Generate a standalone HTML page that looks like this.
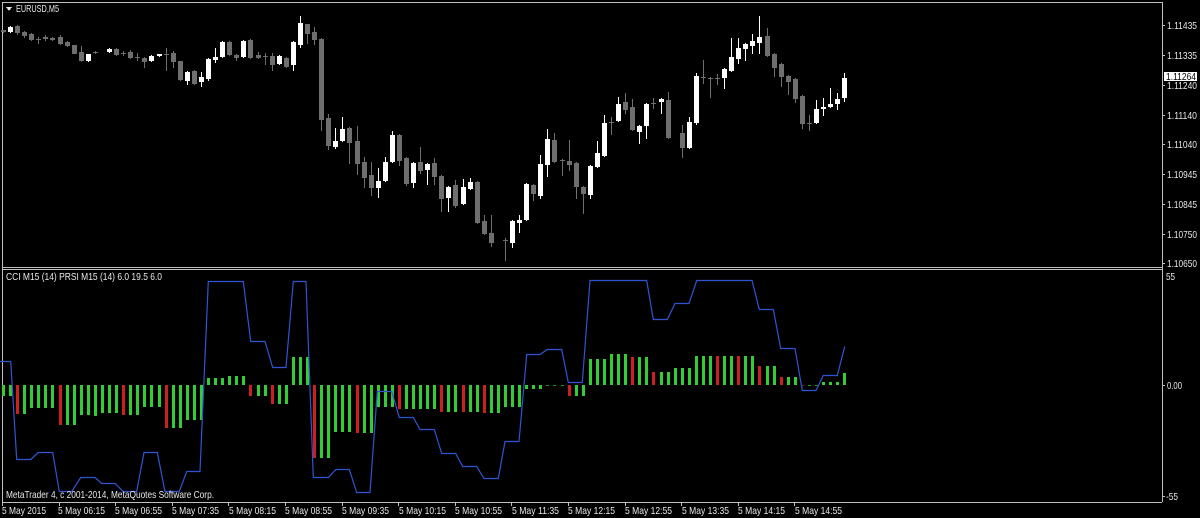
<!DOCTYPE html>
<html><head><meta charset="utf-8"><style>
html,body{margin:0;padding:0;background:#000;}
svg{display:block;}
text{font-family:"Liberation Sans",sans-serif;font-size:10.5px;fill:#e8e8e8;}
</style></head><body>
<svg id="s" width="1200" height="518" viewBox="0 0 1200 518" xmlns="http://www.w3.org/2000/svg" shape-rendering="crispEdges">
<rect width="1200" height="518" fill="#000"/>
<!-- frames -->
<line x1="2" y1="2.5" x2="1162" y2="2.5" stroke="#c0c0c0"/>
<line x1="2.5" y1="2" x2="2.5" y2="502" stroke="#c0c0c0"/>
<line x1="1162.5" y1="2" x2="1162.5" y2="502" stroke="#c0c0c0"/>
<line x1="2" y1="267.5" x2="1162" y2="267.5" stroke="#c0c0c0"/>
<line x1="2" y1="269.5" x2="1162" y2="269.5" stroke="#c0c0c0"/>
<line x1="2" y1="502.5" x2="1162" y2="502.5" stroke="#c0c0c0"/>
<g id="cand"></g>
<g id="hist"></g>
<polyline id="blue" fill="none" stroke="#2f55d4" stroke-width="1.2" shape-rendering="auto" points=""/>
<!-- titles -->
<path d="M6 7 L12 7 L9 11 Z" fill="#e8e8e8"/>
<text x="16" y="12" textLength="43" lengthAdjust="spacingAndGlyphs">EURUSD,M5</text>
<text x="6" y="280" textLength="156" lengthAdjust="spacingAndGlyphs">CCI M15 (14) PRSI M15 (14) 6.0 19.5 6.0</text>
<text x="6" y="498" textLength="208" lengthAdjust="spacingAndGlyphs">MetaTrader 4, c 2001-2014, MetaQuotes Software Corp.</text>
<!-- price axis -->
<g id="pax" stroke="#c0c0c0"></g>
<text x="1167" y="29" textLength="30" lengthAdjust="spacingAndGlyphs">1.11435</text>
<text x="1167" y="59" textLength="30" lengthAdjust="spacingAndGlyphs">1.11335</text>
<text x="1167" y="89" textLength="30" lengthAdjust="spacingAndGlyphs">1.11240</text>
<rect x="1164" y="72" width="33" height="9" fill="#fff"/>
<text x="1166" y="80" textLength="30" lengthAdjust="spacingAndGlyphs" style="fill:#000">1.11264</text>
<text x="1167" y="119" textLength="30" lengthAdjust="spacingAndGlyphs">1.11140</text>
<text x="1167" y="148" textLength="30" lengthAdjust="spacingAndGlyphs">1.11040</text>
<text x="1167" y="178" textLength="30" lengthAdjust="spacingAndGlyphs">1.10945</text>
<text x="1167" y="208" textLength="30" lengthAdjust="spacingAndGlyphs">1.10845</text>
<text x="1167" y="238" textLength="30" lengthAdjust="spacingAndGlyphs">1.10750</text>
<text x="1167" y="267" textLength="30" lengthAdjust="spacingAndGlyphs">1.10650</text>
<text x="1166" y="280" textLength="9" lengthAdjust="spacingAndGlyphs">55</text>
<text x="1167" y="389" textLength="15" lengthAdjust="spacingAndGlyphs">0.00</text>
<text x="1166" y="500" textLength="12" lengthAdjust="spacingAndGlyphs">-55</text>
<!-- time axis -->
<g id="tax" stroke="#c0c0c0"></g>
<text x="2" y="514" textLength="44" lengthAdjust="spacingAndGlyphs">5 May 2015</text>
<text x="58" y="514" textLength="47" lengthAdjust="spacingAndGlyphs">5 May 06:15</text>
<text x="115" y="514" textLength="47" lengthAdjust="spacingAndGlyphs">5 May 06:55</text>
<text x="172" y="514" textLength="47" lengthAdjust="spacingAndGlyphs">5 May 07:35</text>
<text x="229" y="514" textLength="47" lengthAdjust="spacingAndGlyphs">5 May 08:15</text>
<text x="285" y="514" textLength="47" lengthAdjust="spacingAndGlyphs">5 May 08:55</text>
<text x="342" y="514" textLength="47" lengthAdjust="spacingAndGlyphs">5 May 09:35</text>
<text x="399" y="514" textLength="47" lengthAdjust="spacingAndGlyphs">5 May 10:15</text>
<text x="455" y="514" textLength="47" lengthAdjust="spacingAndGlyphs">5 May 10:55</text>
<text x="512" y="514" textLength="47" lengthAdjust="spacingAndGlyphs">5 May 11:35</text>
<text x="568" y="514" textLength="47" lengthAdjust="spacingAndGlyphs">5 May 12:15</text>
<text x="625" y="514" textLength="47" lengthAdjust="spacingAndGlyphs">5 May 12:55</text>
<text x="682" y="514" textLength="47" lengthAdjust="spacingAndGlyphs">5 May 13:35</text>
<text x="738" y="514" textLength="47" lengthAdjust="spacingAndGlyphs">5 May 14:15</text>
<text x="795" y="514" textLength="47" lengthAdjust="spacingAndGlyphs">5 May 14:55</text>
</svg>
<script>
var NS="http://www.w3.org/2000/svg";
function el(p,t,a){var e=document.createElementNS(NS,t);for(var k in a)e.setAttribute(k,a[k]);p.appendChild(e);return e;}
function X(i){return 3+7.07*i;}
// candles: i, bodyTop, bodyBot, wickTop, wickBot, white(1)/gray(0)
var C=[[0,30,31,30,32,0],[1,27,31,26,32,1],[2,26,32,25,34,0],[3,32,35,31,37,0],[4,34,39,33,40,0],[5,39,39,37,43,0],[6,37,38,35,40,0],[7,38,39,37,40,0],[8,37,43,35,44,0],[9,42,45,41,46,0],[10,45,53,45,53,0],[11,52,60,46,61,0],[12,54,60,54,61,1],[13,52,52,51,53,0],[15,49,51,48,52,1],[16,49,54,48,55,0],[17,53,53,51,55,0],[18,52,57,50,58,0],[19,57,57,53,60,0],[20,58,61,57,67,0],[21,56,60,55,61,1],[22,54,55,54,56,1],[23,54,54,48,70,0],[24,53,61,51,67,0],[25,61,79,61,80,0],[26,72,80,71,84,1],[27,71,83,70,84,0],[28,77,81,72,86,1],[29,59,78,58,80,1],[30,57,59,48,62,1],[31,42,56,41,57,1],[32,42,54,41,55,0],[33,55,57,54,60,0],[34,41,56,40,57,1],[35,40,57,39,58,0],[36,55,57,52,58,0],[37,56,56,53,64,0],[38,56,64,53,70,0],[39,56,63,55,64,1],[40,58,66,57,67,0],[41,42,64,41,70,1],[42,23,44,16,47,1],[43,24,33,24,43,0],[44,32,39,27,44,0],[45,39,119,38,130,0],[46,118,145,114,149,0],[47,141,146,128,148,1],[48,129,140,117,141,1],[49,128,142,127,163,0],[50,141,163,126,174,0],[51,162,177,157,187,0],[52,175,187,162,195,0],[53,181,187,168,197,1],[54,162,180,157,181,1],[55,135,161,131,162,1],[56,135,160,134,165,0],[57,158,183,157,185,0],[58,163,182,162,187,1],[59,162,170,147,173,0],[60,164,169,163,184,1],[61,163,176,158,184,0],[62,176,198,175,211,0],[63,187,197,186,211,1],[64,185,205,180,207,0],[65,187,203,179,204,1],[66,182,188,178,189,1],[67,182,222,181,223,0],[68,221,233,215,234,0],[69,233,242,215,246,0],[71,240,240,238,260,0],[72,221,242,220,247,1],[73,220,222,215,232,1],[74,184,219,183,220,1],[75,185,193,184,200,0],[76,164,195,155,198,1],[77,139,164,129,176,1],[78,140,161,133,162,0],[79,160,160,159,175,0],[80,161,164,140,170,0],[81,163,186,162,198,0],[82,187,193,186,213,0],[83,166,194,165,198,1],[84,153,166,141,167,1],[85,123,155,115,156,1],[86,122,122,117,134,0],[87,104,120,97,121,1],[88,102,109,93,113,0],[89,107,129,99,130,0],[90,126,131,125,143,1],[91,104,125,103,138,1],[92,103,103,98,108,0],[93,99,101,98,113,1],[94,100,137,92,138,0],[96,133,147,125,157,0],[97,122,147,117,148,1],[98,76,122,73,124,1],[99,77,77,60,83,0],[100,78,78,77,97,0],[101,78,78,74,84,0],[102,69,77,68,88,1],[103,57,70,38,71,1],[104,48,58,38,63,1],[105,44,48,43,60,1],[106,41,45,34,53,1],[107,37,42,16,53,1],[108,36,55,28,56,0],[109,54,67,53,76,0],[110,64,76,63,86,0],[111,76,81,75,94,0],[112,79,98,78,102,0],[113,96,123,95,128,0],[114,123,123,115,130,0],[115,109,122,100,123,1],[116,107,108,98,115,1],[117,104,106,88,107,1],[118,99,103,93,109,1],[119,78,97,73,101,1]];
var g=document.getElementById("cand");
C.forEach(function(c){var x=Math.round(X(c[0]));var col=c[5]?"#ffffff":"#6e6e6e";
el(g,"rect",{x:x,y:c[3],width:1,height:Math.max(1,c[4]-c[3]+1),fill:col});
var h=c[2]-c[1];
if(h<1){el(g,"rect",{x:x-2,y:c[1],width:5,height:1,fill:col});}
else if(c[5]){el(g,"rect",{x:x-2,y:c[1],width:5,height:h+1,fill:"#ffffff"});el(g,"rect",{x:x-1,y:c[1]+1,width:3,height:Math.max(0,h-1),fill:"#000"});
 if(h>=2)el(g,"rect",{x:x-1,y:c[1]+1,width:3,height:h-1,fill:"#fff"});}
else{el(g,"rect",{x:x-2,y:c[1],width:5,height:h+1,fill:col});}
});
// histogram: end y per bar, color flag r
var H=[[396],[396],[414,1],[414],[408],[408],[408],[408],[425,1],[425],[425],[415],[415],[416],[413],[413],[413],[415,1],[415],[415],[407],[407],[407],[428,1],[428],[428],[420],[420],[420],[378],[378],[378],[376],[376],[376],[396,1],[396],[396],[404,1],[404],[404],[357],[357],[357],[458,1],[458],[458],[432],[432],[432],[433,1],[433],[433],[407],[407],[407],[409,1],[409],[409],[409],[409],[409],[412,1],[412],[412],[412,1],[412],[412],[413,1],[413],[413],[407],[407],[407],[389],[389],[389],[386,2],[386,2],[386,2],[396,1],[396],[396],[359],[359],[359],[354],[354],[354],[357,1],[357],[357],[372,1],[372],[372],[368],[368],[368],[356],[356],[356],[356,1],[356],[356],[356,1],[356],[356],[366,1],[366],[366],[377,1],[377],[377],[386,3],[386,2],[386,2],[382],[382],[382],[373]];
var hg=document.getElementById("hist");
H.forEach(function(h,i){var x=Math.round(X(i))-1;var y=h[0];var col=h[1]==1?"#cc2020":h[1]==2?"#1f9a1f":h[1]==3?"#8a1a1a":"#32cd32";
var t=Math.min(385,y),b=Math.max(385,y);if(h[1]>=2){t=385;b=386;}
el(hg,"rect",{x:x,y:t,width:3,height:Math.max(1,b-t),fill:col});});
var P=[[0,361],[10.7,361],[16.7,459],[30.7,459],[38.3,452],[52.7,452],[59.3,491],[71.7,491],[80.7,477],[95,477],[101.7,483],[115,483],[123.3,491],[136.7,491],[144,452],[157.3,452],[165,491],[179.3,491],[186.7,471],[200,471],[208.3,281],[243.3,281],[250.7,341],[265,341],[272.7,367],[286,367],[293.3,281],[306,281],[313.3,477],[328.3,477],[336,469],[349.3,469],[356.7,492],[370,492],[377.3,391],[391.7,391],[399.3,417],[413.3,417],[420,429],[434.3,429],[441.7,453],[455.7,453],[462.7,466],[476.7,466],[484,478],[498.3,478],[505,441],[519,441],[526.7,354],[540,354],[547.3,349],[561.7,349],[568.3,382],[582.3,382],[590,280],[646.7,280],[653.3,319],[667.3,319],[675,303],[689,303],[696.7,280],[752,280],[759.3,309],[773.3,309],[780.7,348],[795,348],[802.3,390],[816,390],[823.3,375],[837.3,375],[844.7,346]];
document.getElementById("blue").setAttribute("points",P.map(function(p){return p[0]+","+(p[1]+0.5)}).join(" "));
var pax=document.getElementById("pax");
[25,55,85,115,144,174,204,234,263,385,496].forEach(function(y){el(pax,"line",{x1:1162,x2:1165,y1:y+.5,y2:y+.5});});
var tax=document.getElementById("tax");
for(var k=0;k<15;k++){var x=Math.round(2+56.6*k)+.5;el(tax,"line",{x1:x,x2:x,y1:502,y2:506});}
</script>
</body></html>
